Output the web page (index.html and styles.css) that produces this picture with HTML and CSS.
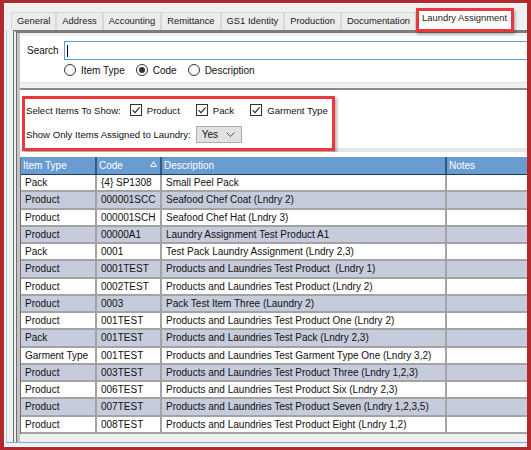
FILE: index.html
```html
<!DOCTYPE html>
<html lang="en">
<head>
  <meta charset="UTF-8" />
  <meta name="viewport" content="width=device-width, initial-scale=1.0" />
  <title>Laundry Assignment</title>
  <link rel="stylesheet" href="styles.css">
</head>
<body>
  <div class="shot">
    <div class="window">
      <div class="tabs">
        <div class="tab">General</div>
        <div class="tab">Address</div>
        <div class="tab">Accounting</div>
        <div class="tab">Remittance</div>
        <div class="tab">GS1 Identity</div>
        <div class="tab">Production</div>
        <div class="tab">Documentation</div>
        <div class="tab active">Laundry Assignment</div>
      </div>

      <div class="page">
        <div class="sunken">
          <div class="search">
            <span class="search-label">Search</span>
            <div class="search-input"><span class="caret"></span></div>
            <div class="radios">
              <span class="radio-opt"><span class="radio"></span>Item Type</span>
              <span class="radio-opt"><span class="radio on"></span>Code</span>
              <span class="radio-opt"><span class="radio"></span>Description</span>
            </div>
          </div>

          <div class="filters-wrap">
            <div class="filters">
              <div class="filter-row">
                <span>Select Items To Show:</span>
                <span class="check-opt"><span class="check"><svg width="10" height="10" viewBox="0 0 10 10"><path d="M1.5 5.2 L4 7.6 L8.6 2.4" fill="none" stroke="#222" stroke-width="1.1"/></svg></span>Product</span>
                <span class="check-opt"><span class="check"><svg width="10" height="10" viewBox="0 0 10 10"><path d="M1.5 5.2 L4 7.6 L8.6 2.4" fill="none" stroke="#222" stroke-width="1.1"/></svg></span>Pack</span>
                <span class="check-opt"><span class="check"><svg width="10" height="10" viewBox="0 0 10 10"><path d="M1.5 5.2 L4 7.6 L8.6 2.4" fill="none" stroke="#222" stroke-width="1.1"/></svg></span>Garment Type</span>
              </div>
              <div class="filter-row">
                <span>Show Only Items Assigned to Laundry:</span>
                <div class="combo">
                  <span>Yes</span>
                  <svg width="9" height="5" viewBox="0 0 9 5"><path d="M0.5 0.5 L4.5 4.5 L8.5 0.5" fill="none" stroke="#555"/></svg>
                </div>
              </div>
            </div>
          </div>

          <div class="grid-wrap">
            <div class="grid">
              <div class="grid-row grid-head">
                <div>Item Type</div>
                <div class="sorted">Code<svg width="7" height="6" viewBox="0 0 7 6"><path d="M3.5 0.7 L6.4 5.4 L0.6 5.4 Z" fill="none" stroke="#fff"/></svg></div>
                <div>Description</div>
                <div>Notes</div>
              </div>
              <div class="grid-body">
                <div class="grid-row"><div>Pack</div><div>{4} SP1308</div><div>Small Peel Pack</div><div></div></div>
                <div class="grid-row"><div>Product</div><div>000001SCC</div><div>Seafood Chef Coat (Lndry 2)</div><div></div></div>
                <div class="grid-row"><div>Product</div><div>000001SCH</div><div>Seafood Chef Hat (Lndry 3)</div><div></div></div>
                <div class="grid-row"><div>Product</div><div>00000A1</div><div>Laundry Assignment Test Product A1</div><div></div></div>
                <div class="grid-row"><div>Pack</div><div>0001</div><div>Test Pack Laundry Assignment (Lndry 2,3)</div><div></div></div>
                <div class="grid-row"><div>Product</div><div>0001TEST</div><div>Products and Laundries Test Product&nbsp; (Lndry 1)</div><div></div></div>
                <div class="grid-row"><div>Product</div><div>0002TEST</div><div>Products and Laundries Test Product (Lndry 2)</div><div></div></div>
                <div class="grid-row"><div>Product</div><div>0003</div><div>Pack Test Item Three (Laundry 2)</div><div></div></div>
                <div class="grid-row"><div>Product</div><div>001TEST</div><div>Products and Laundries Test Product One (Lndry 2)</div><div></div></div>
                <div class="grid-row"><div>Pack</div><div>001TEST</div><div>Products and Laundries Test Pack (Lndry 2,3)</div><div></div></div>
                <div class="grid-row"><div>Garment Type</div><div>001TEST</div><div>Products and Laundries Test Garment Type One (Lndry 3,2)</div><div></div></div>
                <div class="grid-row"><div>Product</div><div>003TEST</div><div>Products and Laundries Test Product Three (Lndry 1,2,3)</div><div></div></div>
                <div class="grid-row"><div>Product</div><div>006TEST</div><div>Products and Laundries Test Product Six (Lndry 2,3)</div><div></div></div>
                <div class="grid-row"><div>Product</div><div>007TEST</div><div>Products and Laundries Test Product Seven (Lndry 1,2,3,5)</div><div></div></div>
                <div class="grid-row"><div>Product</div><div>008TEST</div><div>Products and Laundries Test Product Eight (Lndry 1,2)</div><div></div></div>
              </div>
            </div>
          </div>
        </div>
      </div>
    </div>
  </div>
</body>
</html>
```

FILE: styles.css
```css
* {
  box-sizing: border-box;
}
body {
  margin: 0;
  font-family: 'Liberation Sans', Arial, sans-serif;
  font-size: 10px;
  color: #111;
}
.shot {
  width: 531px;
  height: 450px;
  display: flex;
  border: solid #b1282d;
  border-width: 3px 4px;
  background: #f0f0f0;
  overflow: hidden;
}
.window {
  flex: 1;
  min-width: 0;
  display: flex;
  flex-direction: column;
  border: 1px solid #fbfbfb;
}

/* tabs */
.tabs {
  flex: none;
  height: 26px;
  display: flex;
  align-items: flex-end;
  padding-left: 6px;
}
.tab {
  height: 18px;
  line-height: 16px;
  padding: 0 5px;
  font-size: 9.4px;
  color: #222;
  white-space: nowrap;
  background: #ececec;
  border: 1px solid #d8d8d8;
  border-bottom: 0;
}
.tab.active {
  position: relative;
  height: 21px;
  margin-left: 1px;
  padding: 0 4px;
  background: #fff;
  border-color: #fff;
}
.tab.active::after {
  content: "";
  position: absolute;
  left: -2px;
  right: -3px;
  top: -2px;
  bottom: -2px;
  border: 3px solid #e8373d;
  box-shadow: 1px 2px 3px rgba(0, 0, 0, 0.35);
}

/* tab page */
.page {
  flex: 1;
  min-height: 0;
  display: flex;
  margin: 0 -12px 3px 1px;
  padding-left: 6px;
  border-left: 1px solid #a9c9ea;
  border-bottom: 1px solid #78ade2;
}
.sunken {
  flex: 1;
  min-width: 0;
  display: flex;
  flex-direction: column;
  padding: 3px 0 0 3px;
  border-top: 3px solid #7c7c7c;
  border-left: 4px double #6c6c6c;
  box-shadow: inset 3px 0 0 #c4c4c4;
}

/* search box */
.search {
  height: 47px;
  display: grid;
  grid-template-columns: 37px 1fr;
  grid-template-rows: 19px 16px;
  row-gap: 2px;
  align-items: center;
  padding: 5px 0 0 7px;
  background: #fff;
  border-bottom: 1px solid #e3e3e3;
}
.search-input {
  height: 19px;
  padding: 3px 0 0 2px;
  border: 1px solid #5a9ee2;
  border-right: 0;
}
.caret {
  display: block;
  width: 1px;
  height: 12px;
  background: #000;
}
.radios {
  grid-column: 2;
  display: flex;
  align-items: center;
  gap: 11px;
}
.radio-opt,
.check-opt {
  display: flex;
  align-items: center;
  gap: 5px;
}
.radio {
  width: 12px;
  height: 12px;
  border: 1px solid #333;
  border-radius: 50%;
  background: #fff;
}
.radio.on::after {
  content: "";
  display: block;
  width: 6px;
  height: 6px;
  margin: 2px;
  border-radius: 50%;
  background: #333;
}

/* filters */
.filters-wrap {
  margin-top: 5px;
  padding: 6px 0 0 2px;
  background: #fff;
  border-top: 2px solid #8a8a8a;
  border-bottom: 4px solid #e6e6e6;
}
.filters {
  width: max-content;
  margin-bottom: -3px;
  padding: 0 4px 1px 1px;
  font-size: 9.6px;
  border: 3px solid #e8373d;
  box-shadow: 2px 2px 3px rgba(0, 0, 0, 0.3);
}
.filter-row {
  height: 22px;
  display: flex;
  align-items: center;
}
.filter-row + .filter-row {
  height: 25px;
  margin-top: 1px;
}
.check-opt {
  margin-left: 16px;
}
.check-opt:nth-child(2) {
  margin-left: 9px;
}
.check {
  width: 12px;
  height: 12px;
  border: 1px solid #333;
  background: #fff;
}
.check svg {
  display: block;
}
.combo {
  width: 46px;
  height: 17px;
  margin-left: 5px;
  display: flex;
  align-items: center;
  justify-content: space-between;
  padding: 0 6px 0 5px;
  font-size: 10px;
  background: #e1e1e1;
  border: 1px solid #adadad;
}

/* grid */
.grid-wrap {
  padding-top: 5px;
  background: #fff;
}
.grid {
  border-left: 1px solid #6e6e6e;
}
.grid-row {
  height: 17.27px;
  display: grid;
  grid-template-columns: 76px 65px 285px 1fr;
  border-bottom: 2px solid #a3a3a3;
  background: #fff;
}
.grid-row div {
  padding-left: 4px;
  line-height: 15px;
  white-space: nowrap;
  overflow: hidden;
  border-right: 2px solid #a3a3a3;
}
.grid-body .grid-row:nth-child(even) {
  background: #c7ccdc;
}
.grid-head {
  height: 18px;
  background: #6a9bd1;
  color: #fff;
  border-bottom: 1px solid #1e3d63;
}
.grid-head div {
  padding-left: 2px;
  line-height: 17px;
  border-right-color: #35587f;
}
.grid-head .sorted {
  display: flex;
  align-items: center;
  justify-content: space-between;
  padding-right: 3px;
}
.sorted svg {
  margin-top: -3px;
}
```
